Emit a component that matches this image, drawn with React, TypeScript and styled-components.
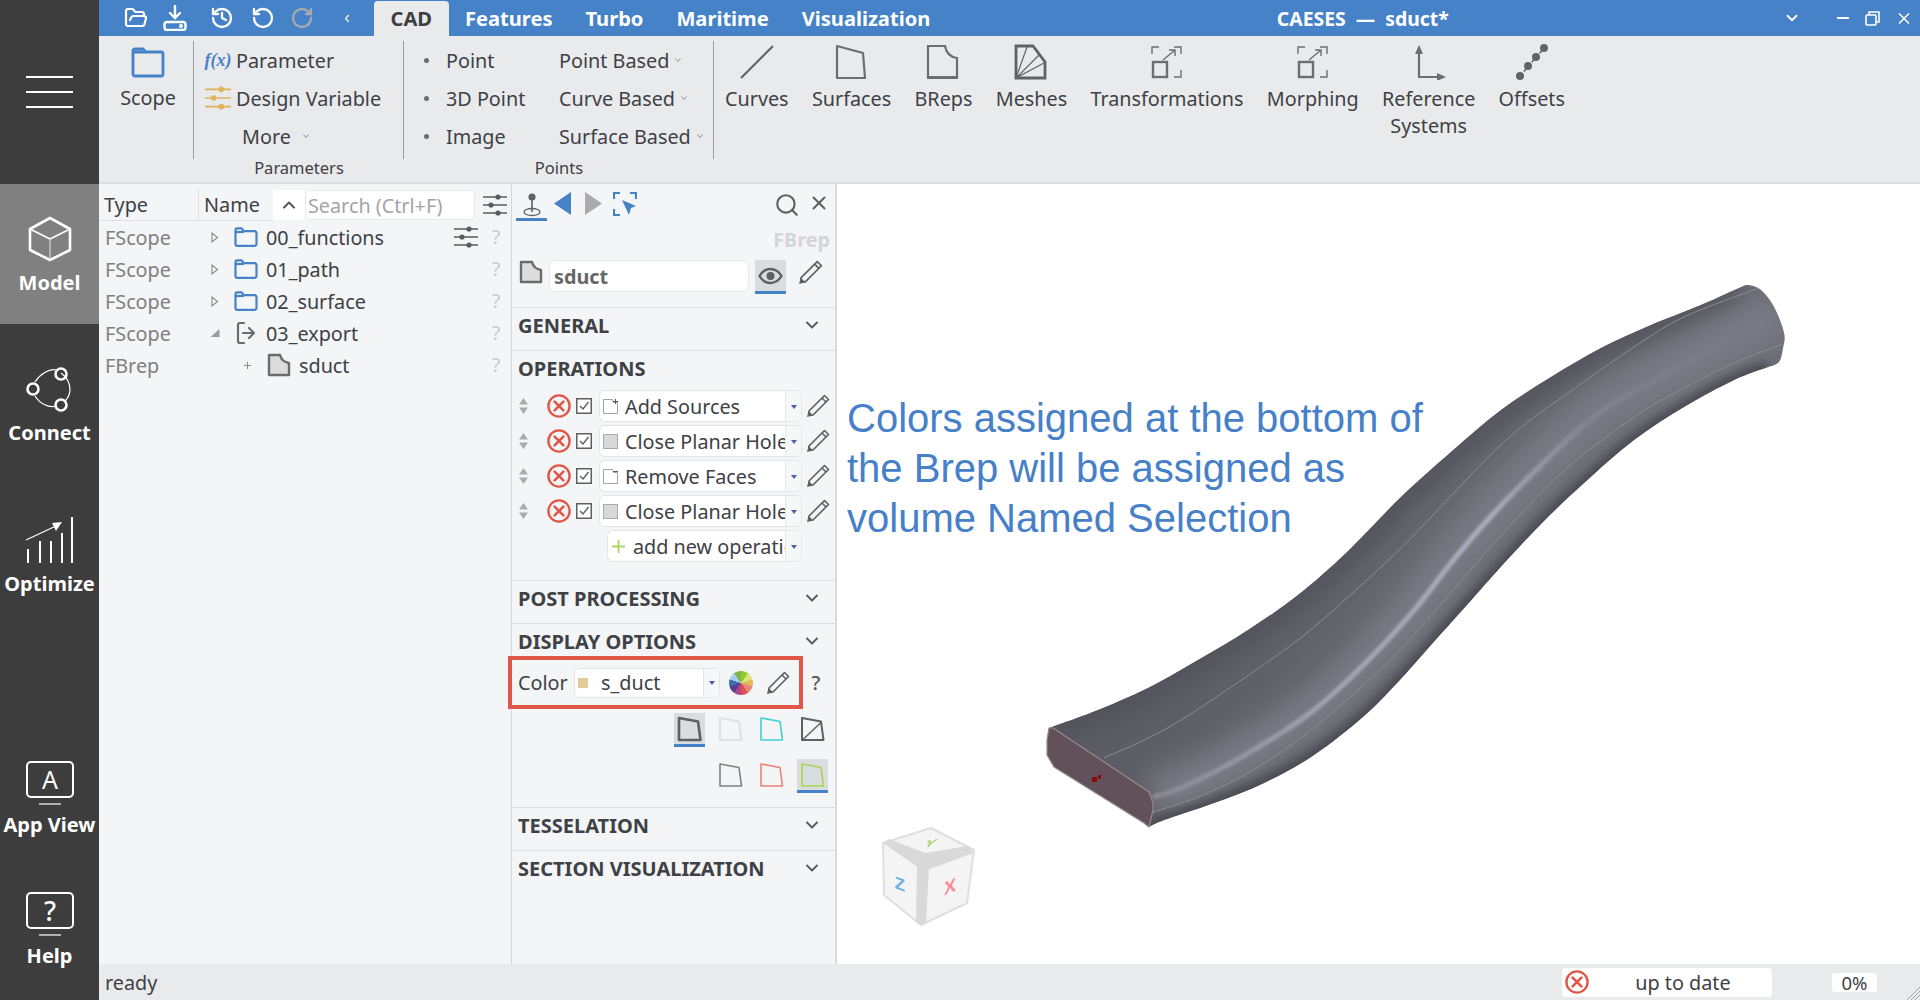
import React from 'react';
import styled, { createGlobalStyle } from 'styled-components';
import { FolderOpen, History, RotateCcw, RotateCw, ChevronLeft, ChevronDown, ChevronUp, Search, X, Minus } from 'lucide-react';

const GlobalStyle = createGlobalStyle`
  html, body { margin: 0; padding: 0; height: 100%; overflow: hidden; }
  #root { height: 100%; }
  * { box-sizing: border-box; }
  body { font-family: "Noto Sans", "Open Sans", sans-serif; font-size: 19.8px; color: #3e4145; }
`;

const Shell = styled.div`display: grid; grid-template-columns: 99px 1fr; width: 1920px; height: 1000px; overflow: hidden;`;

/* ---------- left navigation ---------- */
const Sidebar = styled.nav`background: #3d3d3d; display: flex; flex-direction: column; height: 1000px;`;
const Burger = styled.div`height: 184px; flex: none; display: flex; flex-direction: column; gap: 13px; padding: 76px 26px 0;`;
const BurgerLine = styled.span`display: block; height: 2px; background: #fff;`;
const NavItem = styled.div<{ $active?: boolean; $height: number; $top?: number }>`
  height: ${p => p.$height}px; flex: none; margin-top: ${p => p.$top ?? 0}px;
  background: ${p => (p.$active ? '#808080' : 'transparent')};
  display: flex; flex-direction: column; align-items: center; padding-top: 32px;
`;
const NavIcon = styled.svg`width: 50px; height: 46px; display: block; flex: none; overflow: visible;`;
const NavLabel = styled.span`margin-top: 8px; color: #fff; font-weight: 700; font-size: 20px; line-height: 26px; white-space: nowrap;`;
const NavSpacer = styled.div`flex: 1;`;

/* ---------- title bar ---------- */
const Main = styled.div`display: flex; flex-direction: column; min-width: 0; height: 1000px;`;
const TitleBar = styled.header`height: 36px; flex: none; background: #4682c8; display: flex; align-items: flex-end; color: #fff; padding-left: 25px;`;
const QuickIcon = styled.span<{ $ml: number; $w?: number; $dim?: boolean }>`
  width: ${p => p.$w ?? 24}px; height: 36px; flex: none; margin-left: ${p => p.$ml}px; display: flex; align-items: center; justify-content: center;
  color: ${p => (p.$dim ? '#a6a9ad' : '#fff')};
`;
const Tabs = styled.div`display: flex; margin-left: 21px; height: 36px; align-items: flex-end;`;
const Tab = styled.div<{ $active?: boolean }>`
  height: ${p => (p.$active ? 35 : 36)}px; padding: 0 16.5px; display: flex; align-items: center; font-weight: 700; font-size: 20.1px;
  color: ${p => (p.$active ? '#3e3e3e' : '#fff')}; background: ${p => (p.$active ? '#e9eaec' : 'transparent')};
  border-radius: 4px 4px 0 0;
`;
const WindowTitle = styled.div`margin-left: 330px; height: 36px; display: flex; align-items: center; font-weight: 700; font-size: 19.4px; white-space: pre;`;
const WindowControls = styled.div`margin-left: auto; height: 36px; display: flex; align-items: center; padding-right: 7px;`;
const WindowButton = styled.span<{ $ml: number }>`margin-left: ${p => p.$ml}px; display: flex; align-items: center; justify-content: center; width: 18px; height: 18px;`;

/* ---------- ribbon ---------- */
const Ribbon = styled.section`height: 148px; flex: none; background: #e9eaec; border-bottom: 2px solid #dedfe1; display: flex; align-items: flex-start;`;
const Group = styled.div<{ $w?: number }>`display: flex; flex-direction: column; flex: none; width: ${p => (p.$w ? `${p.$w}px` : 'auto')}; padding-top: 5px;`;
const GroupBody = styled.div<{ $sep?: boolean }>`height: 118px; border-right: ${p => (p.$sep ? '1px solid #9b9da0' : 'none')};`;
const GroupLabel = styled.div`text-align: center; font-size: 16.5px; line-height: 18px; color: #3e4145;`;
const ScopeButton = styled.div`display: flex; flex-direction: column; align-items: center; padding: 2px 0 0 4px;`;
const ListRow = styled.div<{ $pl?: number }>`height: 38px; display: flex; align-items: center; padding-left: ${p => p.$pl ?? 10}px; white-space: nowrap;`;
const RowIcon = styled.span`width: 28px; height: 28px; margin-right: 4px; display: flex; align-items: center; justify-content: center; flex: none;`;
const Fx = styled.i`color: #4682c8; font-family: "Liberation Serif", serif; font-weight: 700; font-size: 18px; white-space: nowrap;`;
const SmallChevron = styled.span<{ $ml: number }>`margin-left: ${p => p.$ml}px; width: 6px; height: 6px; display: inline-flex; align-items: center;`;
const PointGrid = styled.div`display: grid; grid-template-columns: 155px 1fr; grid-auto-rows: 38px;`;
const Bullet = styled.span`width: 5px; height: 5px; border-radius: 50%; background: #6b6d70; margin: 0 17px 0 20px; flex: none;`;
const PointCell = styled.div`display: flex; align-items: center; white-space: nowrap;`;
const LargeRow = styled.div`display: flex; gap: 23.3px; padding: 8px 0 0 11px;`;
const LargeButton = styled.div`display: flex; flex-direction: column; align-items: center; text-align: center; line-height: 27px; white-space: nowrap;`;
const LargeIcon = styled.svg`width: 36px; height: 36px; display: block; flex: none; margin-bottom: 5px;`;

/* ---------- workspace ---------- */
const Workspace = styled.div`flex: 1; display: flex; min-height: 0;`;
const TreePanel = styled.aside`width: 413px; flex: none; background: #f3f5f7; border-right: 1px solid #d5d7da; padding-top: 4px;`;
const TreeHead = styled.div`height: 33px; display: flex; align-items: stretch;`;
const HeadCell = styled.div<{ $w: number; $sep?: boolean }>`
  width: ${p => p.$w}px; flex: none; display: flex; align-items: center; padding-left: 5px;
  border-bottom: 1px solid #dfe1e4; border-right: ${p => (p.$sep ? '1px solid #dfe1e4' : 'none')};
`;
const SortButton = styled.div`width: 32px; height: 30px; margin-top: 2px; background: #fff; flex: none; display: flex; align-items: center; justify-content: center; color: #555;`;
const SearchInput = styled.input`
  width: 170px; height: 30px; margin-top: 2px; flex: none; border: 1px solid #e6e8ea; border-radius: 5px; background: #fff; padding: 0 2px; outline: none;
  font: inherit; color: #444; &::placeholder { color: #a2a4a7; opacity: 1; }
`;
const HeadSliders = styled.span`margin: 5px 0 0 8px; display: flex;`;
const TreeRow = styled.div`height: 32px; display: flex; align-items: center; padding: 0 9px 0 6px;`;
const TypeCell = styled.span`width: 102px; flex: none; color: #808080;`;
const Expander = styled.span<{ $depth?: boolean }>`width: 16px; flex: none; margin-left: ${p => (p.$depth ? 32 : 0)}px; display: flex; justify-content: center; align-items: center;`;
const TreeIcon = styled.span<{ $ml: number }>`width: 24px; height: 24px; margin-left: ${p => p.$ml}px; flex: none; display: flex; align-items: center; justify-content: center;`;
const TreeName = styled.span`margin-left: 8px; white-space: nowrap; color: #3e4145;`;
const RowTail = styled.span`margin-left: auto; display: flex; align-items: center; gap: 12px;`;
const Unknown = styled.span`width: 12px; text-align: center; color: #c8cacc; font-size: 19px;`;

const PropsPanel = styled.section`width: 325px; flex: none; background: #f3f5f7; border-right: 2px solid #d9dbde; padding-top: 8px; position: relative;`;
const PropsToolbar = styled.div`height: 29px; display: flex; align-items: flex-start; padding-left: 4px;`;
const PinTool = styled.div`width: 31px; height: 29px; border-bottom: 3px solid #4682c8; display: flex; justify-content: center; flex: none;`;
const ToolSlot = styled.span<{ $ml: number }>`margin-left: ${p => p.$ml}px; flex: none; display: flex;`;
const TypeTag = styled.div`margin-top: 8px; height: 22px; line-height: 22px; text-align: right; padding-right: 5px; font-weight: 700; color: #d4d5d7;`;
const NameRow = styled.div`margin-top: 9px; height: 34px; display: flex; align-items: flex-start; padding-left: 7px;`;
const NameInput = styled.input`
  width: 200px; height: 32px; margin-left: 6px; flex: none; border: 1px solid #e6e8ea; border-radius: 6px; background: #fff; padding: 0 4px; outline: none;
  font: inherit; font-weight: 700; color: #666;
`;
const EyeToggle = styled.div`width: 31px; height: 34px; margin-left: 6px; flex: none; background: #dadde0; border-bottom: 3px solid #4682c8; display: flex; align-items: center; justify-content: center;`;
const Section = styled.div<{ $pb?: number; $first?: boolean }>`border-top: 1px solid #dcdee1; padding-bottom: ${p => p.$pb ?? 8}px; margin-top: ${p => (p.$first ? 13 : 0)}px;`;
const SectionHead = styled.div`height: 34px; display: flex; align-items: center; justify-content: space-between; padding: 0 13px 0 6px; font-weight: 700; font-size: 20px; color: #3e4145; white-space: nowrap; text-transform: uppercase;`;
const OpList = styled.div`display: flex; flex-direction: column; gap: 3px; margin-top: 5px;`;
const OpRow = styled.div`height: 32px; display: flex; align-items: center; padding-left: 7px;`;
const AddRow = styled.div`height: 32px; display: flex; align-items: center; padding-left: 95px;`;
const Slot = styled.span<{ $ml: number }>`margin-left: ${p => p.$ml}px; display: flex; flex: none;`;
const Combo = styled.div<{ $w: number; $h?: number; $ml?: number }>`
  width: ${p => p.$w}px; height: ${p => p.$h ?? 32}px; margin-left: ${p => p.$ml ?? 0}px; flex: none;
  background: #fff; border: 1px solid #e3e5e8; border-radius: 6px; display: flex; align-items: center; overflow: hidden;
`;
const ComboValue = styled.span`flex: 1; min-width: 0; display: flex; align-items: center; overflow: hidden; white-space: nowrap; padding-left: 3px; svg { flex: none; }`;
const ComboText = styled.span<{ $ml?: number }>`margin-left: ${p => p.$ml ?? 7}px; color: #3e4145; flex: none;`;
const ComboArrow = styled.span`width: 16px; align-self: stretch; flex: none; border-left: 1px solid #e3e5e8; background: #f6f7f8; display: flex; align-items: center; justify-content: center;`;
const ArrowDown = styled.span`width: 0; height: 0; border: 3px solid transparent; border-top: 4px solid #4a5fb0; margin-top: 4px;`;
const ColorWrap = styled.div`display: flex; align-items: center; margin-top: -2px;`;
const ColorBox = styled.div`width: 295px; height: 53px; margin-left: -4px; flex: none; border: 4px solid #e0574a; display: flex; align-items: center; padding-left: 6px;`;
const ColorLabel = styled.span`width: 56px; flex: none;`;
const Wheel = styled.span`
  width: 24px; height: 24px; border-radius: 50%; margin-left: 9px; flex: none;
  background: conic-gradient(#8ecb2f 0 36deg, #dfe37c 36deg 72deg, #dfb95c 72deg 108deg, #ea8478 108deg 144deg, #e24f4f 144deg 180deg, #a8478f 180deg 216deg, #5a3f8a 216deg 252deg, #3d6ea8 252deg 288deg, #a8cbef 288deg 324deg, #7fb44a 324deg 360deg);
`;
const HelpMark = styled.span`margin-left: 7px; width: 12px; text-align: center; font-weight: 500; color: #55585c;`;
const ShapeRow = styled.div<{ $mt: number }>`height: 34px; margin-top: ${p => p.$mt}px; display: flex; justify-content: flex-end; align-items: center; padding-right: 7px; gap: 10px;`;
const ShapeButton = styled.span<{ $on?: boolean }>`
  width: 31px; height: 34px; display: flex; align-items: center; justify-content: center; flex: none;
  background: ${p => (p.$on ? '#dadde0' : 'transparent')}; border-bottom: 3px solid ${p => (p.$on ? '#4682c8' : 'transparent')};
`;

const Viewport = styled.main`flex: 1; background: #fff; position: relative; overflow: hidden;`;
const Annotation = styled.div`position: absolute; left: 10px; top: 209px; font-family: "Liberation Sans", Arial, sans-serif; font-size: 40px; line-height: 50px; color: #4680c8; white-space: nowrap;`;
const Scene = styled.svg`position: absolute; left: 0; top: 0; width: 1085px; height: 780px;`;

/* ---------- status bar ---------- */
const StatusBar = styled.footer`height: 36px; flex: none; background: #e9eaec; display: flex; align-items: center; padding-left: 6px; position: relative;`;
const StatusField = styled.div`margin-left: auto; width: 210px; height: 29px; background: #fff; border-radius: 4px; display: flex; align-items: center; padding-left: 3px;`;
const StatusText = styled.span`flex: 1; text-align: center; padding-left: 5px;`;
const Percent = styled.div`width: 45px; height: 19px; margin: 0 43px 0 60px; background: #fff; border-radius: 3px; display: flex; align-items: center; justify-content: center; font-size: 18.5px;`;
const Grip = styled.svg`position: absolute; right: 0; bottom: 0; width: 14px; height: 14px;`;

/* ---------- shared drawings ---------- */
const Sliders = ({ color = '#5a5c60', size = 24 }: { color?: string; size?: number }) => (
  <svg width={size} height={size} viewBox="0 0 24 24" fill="none" stroke={color} strokeWidth="1.6">
    <path d="M0 4h24M0 12h24M0 20h24" />
    <circle cx="15" cy="4" r="2.6" fill={color} stroke="none" />
    <circle cx="8" cy="12" r="2.6" fill={color} stroke="none" />
    <circle cx="15" cy="20" r="2.6" fill={color} stroke="none" />
  </svg>
);
const Folder = ({ w = 24, h = 20 }: { w?: number; h?: number }) => (
  <svg width={w} height={h} viewBox="0 0 24 20" fill="none" stroke="#4682c8" strokeWidth="2.2" strokeLinejoin="round">
    <path d="M1.5 17V3a1.6 1.6 0 0 1 1.6-1.6h4.6l2 2.8h11a1.8 1.8 0 0 1 1.8 1.8V17a1.8 1.8 0 0 1-1.8 1.8H3.2A1.8 1.8 0 0 1 1.5 17z" />
    <path d="M2 5h8" />
  </svg>
);
const BrepDoc = ({ size = 24 }: { size?: number }) => (
  <svg width={size} height={size} viewBox="0 0 24 24">
    <path d="M2 2h11c1 4 3 7 9 8v12H2z" fill="#dcdcdc" stroke="#6b6b6b" strokeWidth="2.4" strokeLinejoin="round" />
  </svg>
);
const Pencil = ({ size = 24 }: { size?: number }) => (
  <svg width={size} height={size} viewBox="0 0 24 24" fill="none" stroke="#5e6063" strokeWidth="1.6" strokeLinejoin="round">
    <path d="M18.5 1.5l4 4L7 21 2.8 21.3 3 17z" />
    <path d="M16 4l4 4" />
    <path d="M1 23l1.6-6.2 4.6 4.6z" fill="#5e6063" stroke="none" />
  </svg>
);
const ErrorCircle = ({ size = 24 }: { size?: number }) => (
  <svg width={size} height={size} viewBox="0 0 24 24" fill="none" stroke="#e0574a" strokeWidth="2.4" strokeLinecap="round">
    <circle cx="12" cy="12" r="10.6" />
    <path d="M7.6 7.6l8.8 8.8M16.4 7.6l-8.8 8.8" strokeWidth="2.6" />
  </svg>
);
const Checked = () => (
  <svg width="16" height="16" viewBox="0 0 16 16" fill="none">
    <rect x="0.75" y="0.75" width="14.5" height="14.5" fill="#fff" stroke="#5d5f62" strokeWidth="1.5" />
    <path d="M4 8l3 3 5.5-7" stroke="#5d5f62" strokeWidth="1.4" />
  </svg>
);
const UpDown = () => (
  <svg width="9" height="16" viewBox="0 0 9 16" fill="#a9abae">
    <path d="M4.5 0L9 6.5H0zM0 9.5h9L4.5 16z" />
  </svg>
);
const TriangleOpen = () => (
  <svg width="8" height="11" viewBox="0 0 8 11" fill="none" stroke="#8a8c8f" strokeWidth="1.1"><path d="M1 1l5.5 4.5L1 10z" /></svg>
);
const TriangleDown = () => (
  <svg width="10" height="10" viewBox="0 0 10 10" fill="#9a9c9f"><path d="M9.5 1v8H0.5z" /></svg>
);
const Quad = ({ stroke, width = 1.6, diag }: { stroke: string; width?: number; diag?: boolean }) => (
  <svg width="26" height="26" viewBox="0 0 26 26" fill="none" stroke={stroke} strokeWidth={width} strokeLinejoin="round">
    <path d="M2 2l19 3.5 2.5 18.5H2z" />
    {diag && <path d="M2.5 24L21.5 6" strokeWidth="1.4" />}
  </svg>
);
const OpDoc = ({ mark }: { mark?: 'plus' | 'minus' }) => (
  <svg width="15" height="15" viewBox="0 0 15 15" fill="none" stroke="#8d8f92" strokeWidth="1">
    <path d="M0.5 0.5h9l1 3h4v11H0.5z" stroke="#a2a4a7" />
    {mark === 'plus' && <path d="M12.5 0v5M10 2.5h5" stroke="#55585c" />}
    {mark === 'minus' && <path d="M10 2.5h5" stroke="#55585c" />}
  </svg>
);
const OpFill = () => (
  <svg width="15" height="15" viewBox="0 0 15 15"><rect x="0.5" y="0.5" width="14" height="14" fill="#d8d8d8" stroke="#a8aaad" /></svg>
);
const Tiny = () => (
  <svg width="6" height="6" viewBox="0 0 6 6" fill="none" stroke="#8d8f92" strokeWidth="1"><path d="M0.5 1.5L3 4.5l2.5-3" /></svg>
);

const largeItems: { label: React.ReactNode; icon: React.ReactNode }[] = [
  { label: 'Curves', icon: <path d="M2 34L34 2" stroke="#626366" strokeWidth="2.2" fill="none" /> },
  { label: 'Surfaces', icon: <path d="M3 2l26 7 2 25H3z" stroke="#6c6d70" strokeWidth="2.2" fill="none" strokeLinejoin="round" /> },
  { label: 'BReps', icon: <g fill="none" stroke="#6c6d70" strokeWidth="2.2"><path d="M3 2h17c1 6 5 11 12 12v20H3z" /><path d="M3 33.5h29" strokeWidth="3" /></g> },
  { label: 'Meshes', icon: <g fill="none" stroke="#616264"><path d="M3 2h17l12 16v16H3z" strokeWidth="2.8" /><path d="M3 34L14 3M3 34L26 11M3 34L31 19" strokeWidth="1.2" /></g> },
  { label: 'Transformations', icon: <g fill="none" stroke="#6c6d70"><path d="M3 10V3h7M25 3h7v7M32 26v7h-7" strokeWidth="1.4" /><rect x="4" y="18" width="14" height="15" strokeWidth="2.4" /><path d="M14 16l12-10M20 6h6v6" strokeWidth="1.4" /></g> },
  { label: 'Morphing', icon: <g fill="none" stroke="#6c6d70"><path d="M3 10V3h7M25 3h7v7M32 26v7h-7" strokeWidth="1.4" /><rect x="4" y="18" width="14" height="15" strokeWidth="2.4" /><path d="M14 16l12-10M20 6h6v6" strokeWidth="1.4" /></g> },
  { label: <>Reference<br />Systems</>, icon: <g stroke="#6c6d70" fill="#6c6d70"><path d="M8 8v25h20" strokeWidth="2.2" fill="none" /><path d="M8 1l4 9H4zM35 33l-9 4v-8z" stroke="none" /></g> },
  { label: 'Offsets', icon: <g fill="#626366"><circle cx="6" cy="32" r="4" /><circle cx="14" cy="22" r="4" /><circle cx="22" cy="13" r="4" /><circle cx="30" cy="4" r="4" /><path d="M6 32L30 4" stroke="#626366" strokeWidth="1.6" strokeDasharray="3 3" /></g> },
];

type P = [number, number];
function smooth(pts: P[], move = true) {
  let d = move ? `M${pts[0][0]} ${pts[0][1]}` : `L${pts[0][0]} ${pts[0][1]}`;
  for (let i = 0; i < pts.length - 1; i++) {
    const a = pts[i - 1] ?? pts[i], b = pts[i], c = pts[i + 1], e = pts[i + 2] ?? c;
    d += `C${(b[0] + (c[0] - a[0]) / 6).toFixed(1)} ${(b[1] + (c[1] - a[1]) / 6).toFixed(1)} ${(c[0] - (e[0] - b[0]) / 6).toFixed(1)} ${(c[1] - (e[1] - b[1]) / 6).toFixed(1)} ${c[0]} ${c[1]}`;
  }
  return d;
}
const topEdge: P[] = [[1048, 728], [1097, 710], [1147, 688], [1197, 660], [1247, 630], [1297, 595], [1345, 553], [1400, 497], [1450, 452], [1500, 410], [1550, 377], [1600, 348], [1650, 325], [1700, 305], [1740, 287]];
const cap: P[] = [[1740, 287], [1747, 285], [1760, 290], [1773, 307], [1783, 333], [1782, 348], [1778, 362], [1767, 367]];
const bottomEdge: P[] = [[1767, 367], [1733, 380], [1683, 407], [1633, 440], [1583, 483], [1540, 524], [1497, 570], [1465, 606], [1430, 645], [1397, 682], [1363, 716], [1313, 755], [1263, 783], [1213, 803], [1163, 820], [1148, 827]];
const ductOutline = smooth(topEdge) + smooth(cap, false) + smooth(bottomEdge, false) + 'L1143 823L1053 767L1046 755L1046 740Z';
const ridge: P[] = [[1152, 797], [1180, 788], [1230, 763], [1280, 733], [1313, 710], [1347, 680], [1380, 647], [1415, 608], [1450, 563], [1483, 524], [1517, 488], [1577, 430], [1617, 400], [1667, 373], [1733, 337], [1782, 313]];
const lineA: P[] = [[1103, 758], [1163, 730], [1230, 687], [1297, 640], [1347, 597], [1403, 545], [1467, 478], [1513, 433], [1567, 393], [1633, 347], [1683, 317], [1758, 288]];
const lineB: P[] = [[1152, 812], [1197, 797], [1247, 773], [1297, 740], [1347, 699], [1397, 652], [1433, 612], [1473, 566], [1517, 517], [1567, 467], [1633, 417], [1683, 388], [1733, 363], [1782, 344]];

const Duct = () => (
  <Scene viewBox="836 184 1085 780">
    <defs>
      <clipPath id="ductClip"><path d={ductOutline} /></clipPath>
      <linearGradient id="ductBase" x1="1050" y1="780" x2="1770" y2="300" gradientUnits="userSpaceOnUse">
        <stop offset="0" stopColor="#5a5b63" />
        <stop offset="0.5" stopColor="#65666e" />
        <stop offset="1" stopColor="#6c6d76" />
      </linearGradient>
      <filter id="b14" x="-20%" y="-20%" width="140%" height="140%"><feGaussianBlur stdDeviation="13" /></filter>
      <filter id="b2" x="-20%" y="-20%" width="140%" height="140%"><feGaussianBlur stdDeviation="1.8" /></filter>
      <filter id="b6" x="-20%" y="-20%" width="140%" height="140%"><feGaussianBlur stdDeviation="4" /></filter>
      <linearGradient id="ridgeFade" x1="1152" y1="797" x2="1782" y2="313" gradientUnits="userSpaceOnUse">
        <stop offset="0" stopColor="#8a8b97" />
        <stop offset="0.25" stopColor="#a4a6b4" />
        <stop offset="0.55" stopColor="#aeb0be" />
        <stop offset="0.72" stopColor="#8a8b96" stopOpacity="0.7" />
        <stop offset="1" stopColor="#7d7e88" stopOpacity="0" />
      </linearGradient>
    </defs>
    <g clipPath="url(#ductClip)">
      <rect x="1000" y="260" width="820" height="600" fill="url(#ductBase)" />
      <path d={smooth(topEdge)} fill="none" stroke="#4f5058" strokeWidth="26" filter="url(#b14)" />
      <path d={smooth(ridge)} fill="none" stroke="#797a84" strokeWidth="46" filter="url(#b14)" />
      <path d={smooth(bottomEdge)} fill="none" stroke="#4a4b53" strokeWidth="12" filter="url(#b6)" />
      <path d={smooth(ridge)} fill="none" stroke="url(#ridgeFade)" strokeWidth="5" filter="url(#b2)" />
      <path d={smooth(lineA)} fill="none" stroke="#8b8c8a" strokeWidth="1" />
      <path d={smooth(lineB)} fill="none" stroke="#8b8c8a" strokeWidth="1" />
    </g>
    <path d="M1048 728L1046 740L1046 755L1053 767L1143 823L1148 827L1152 810L1152 803L1148 792L1052 728Z" fill="#62505a" stroke="#8f8d8d" strokeWidth="1.2" strokeLinejoin="round" />
    <path d="M1091 777h5v5h-5zM1097 775h3v4h-3z" fill="#8b0a10" />
  </Scene>
);

const Cube = () => (
  <Scene viewBox="836 184 1085 780">
    <g strokeLinejoin="round">
      <path d="M930 828L882 843L883 895L920 925L966 903L973 850Z" fill="#f4f4f4" stroke="#dfdfdf" strokeWidth="2" />
      <path d="M882 843L888 839L924 853L967 846L972 853L924 871L918 868Z" fill="#d9d9d9" />
      <path d="M916 866C920 861 926 861 928 868L925 923C922 926 917 925 915 921Z" fill="#d9d9d9" />
    </g>
    <text transform="translate(927 847) rotate(-10) skewX(-45) scale(1 .55)" textAnchor="middle" fontFamily="Liberation Sans, sans-serif" fontSize="17" fontWeight="700" fill="#a3d368" style={{ filter: 'blur(0.4px)' }}>Y</text>
    <text transform="translate(899 890) skewY(20)" textAnchor="middle" fontFamily="Liberation Sans, sans-serif" fontSize="17" fontWeight="700" fill="#68aee0" style={{ filter: 'blur(0.4px)' }}>Z</text>
    <text transform="translate(949 893) skewY(-22)" textAnchor="middle" fontFamily="Liberation Sans, sans-serif" fontSize="18" fontWeight="700" fill="#f58a92" style={{ filter: 'blur(0.4px)' }}>X</text>
  </Scene>
);

const ops = [
  { name: 'Add Sources', icon: <OpDoc mark="plus" /> },
  { name: 'Close Planar Holes', icon: <OpFill /> },
  { name: 'Remove Faces', icon: <OpDoc mark="minus" /> },
  { name: 'Close Planar Holes', icon: <OpFill /> },
];

const treeRows = [
  { type: 'FScope', name: '00_functions', kind: 'folder', sliders: true },
  { type: 'FScope', name: '01_path', kind: 'folder' },
  { type: 'FScope', name: '02_surface', kind: 'folder' },
  { type: 'FScope', name: '03_export', kind: 'export' },
  { type: 'FBrep', name: 'sduct', kind: 'brep' },
];

export default function App() {
  return (
    <Shell>
      <GlobalStyle />
      <Sidebar>
        <Burger><BurgerLine /><BurgerLine /><BurgerLine /></Burger>
        <NavItem $active $height={140}>
          <NavIcon viewBox="0 0 50 46" fill="none" stroke="#fff" strokeLinejoin="round">
            <path d="M25 2l20 11v21L25 44 5 34V13z" strokeWidth="2.6" />
            <path d="M5 13l20 10 20-10" strokeWidth="1.6" />
            <path d="M25 23v21" strokeWidth="1.2" stroke="#d5d5d5" />
          </NavIcon>
          <NavLabel>Model</NavLabel>
        </NavItem>
        <NavItem $height={151} $top={10}>
          <NavIcon viewBox="0 0 50 46" fill="none" stroke="#fff">
            <path d="M36 7a21 21 0 0 1 9 17 17 17 0 0 1-6 12M10 16c5-8 15-14 21-12M10 30c5 8 14 12 21 10" strokeWidth="1.2" />
            <circle cx="36" cy="8" r="5.5" strokeWidth="2.6" />
            <circle cx="8" cy="23" r="5.5" strokeWidth="2.6" />
            <circle cx="36" cy="39" r="5.5" strokeWidth="2.6" />
          </NavIcon>
          <NavLabel>Connect</NavLabel>
        </NavItem>
        <NavItem $height={140}>
          <NavIcon viewBox="1 0 50 46" fill="none" stroke="#fff">
            <path d="M4 46V32M16 46V24M27 46V24M38 46V16M48 46V0" strokeWidth="2" />
            <path d="M2 23l32-15" strokeWidth="1.2" />
            <path d="M38 5l-10 1 4 8z" fill="#fff" stroke="none" />
          </NavIcon>
          <NavLabel>Optimize</NavLabel>
        </NavItem>
        <NavSpacer />
        <NavItem $height={131}>
          <NavIcon viewBox="0 -3 50 46" fill="none" stroke="#fff">
            <rect x="2" y="1" width="46" height="35" rx="4" strokeWidth="2" />
            <path d="M14 43h22" strokeWidth="1.6" stroke="#cfcfcf" />
            <text x="25" y="28" textAnchor="middle" fontFamily="Noto Sans, sans-serif" fontSize="25" fill="#fff" stroke="none">A</text>
          </NavIcon>
          <NavLabel>App View</NavLabel>
        </NavItem>
        <NavItem $height={143}>
          <NavIcon viewBox="0 -3 50 46" fill="none" stroke="#fff">
            <rect x="2" y="1" width="46" height="35" rx="4" strokeWidth="2" />
            <path d="M14 43h22" strokeWidth="1.6" stroke="#cfcfcf" />
            <text x="25" y="29" textAnchor="middle" fontFamily="Noto Sans, sans-serif" fontSize="27" fontWeight="500" fill="#fff" stroke="none">?</text>
          </NavIcon>
          <NavLabel>Help</NavLabel>
        </NavItem>
      </Sidebar>

      <Main>
        <TitleBar>
          <QuickIcon $ml={0}><FolderOpen size={26} strokeWidth={2.2} /></QuickIcon>
          <QuickIcon $ml={15}>
            <svg width="24" height="26" viewBox="0 0 24 26" fill="none" stroke="#fff" strokeWidth="2.4" strokeLinecap="round">
              <path d="M12 1v11M7 8l5 5 5-5" />
              <rect x="1.5" y="17" width="21" height="8" rx="2.5" />
              <circle cx="18" cy="21" r="0.8" fill="#fff" />
            </svg>
          </QuickIcon>
          <QuickIcon $ml={23}><History size={26} strokeWidth={2.3} /></QuickIcon>
          <QuickIcon $ml={17}><RotateCcw size={26} strokeWidth={2.3} /></QuickIcon>
          <QuickIcon $ml={15} $dim><RotateCw size={26} strokeWidth={2.3} /></QuickIcon>
          <QuickIcon $ml={27} $w={12}><ChevronLeft size={15} strokeWidth={2.4} /></QuickIcon>
          <Tabs>
            <Tab $active>CAD</Tab>
            <Tab>Features</Tab>
            <Tab>Turbo</Tab>
            <Tab>Maritime</Tab>
            <Tab>Visualization</Tab>
          </Tabs>
          <WindowTitle>CAESES  —  sduct*</WindowTitle>
          <WindowControls>
            <WindowButton $ml={0}><ChevronDown size={20} strokeWidth={2.4} /></WindowButton>
            <WindowButton $ml={33}><Minus size={18} strokeWidth={2.4} /></WindowButton>
            <WindowButton $ml={11}>
              <svg width="15" height="15" viewBox="0 0 15 15" fill="none" stroke="#fff" strokeWidth="1.6">
                <rect x="1" y="4" width="10" height="10" rx="1" />
                <path d="M4 4V1h10v10h-3" />
              </svg>
            </WindowButton>
            <WindowButton $ml={14}><X size={19} strokeWidth={2.2} /></WindowButton>
          </WindowControls>
        </TitleBar>

        <Ribbon>
          <Group $w={95}>
            <GroupBody $sep>
              <ScopeButton>
                <LargeIcon viewBox="0 0 36 36">
                  <path d="M3 8a2 2 0 0 1 2-2h8l3 3h15a2 2 0 0 1 2 2v20a2 2 0 0 1-2 2H5a2 2 0 0 1-2-2z" fill="none" stroke="#4682c8" strokeWidth="2.8" strokeLinejoin="round" />
                  <path d="M3 9h13" stroke="#4682c8" strokeWidth="3" />
                </LargeIcon>
                <span>Scope</span>
              </ScopeButton>
            </GroupBody>
          </Group>
          <Group $w={210}>
            <GroupBody $sep>
              <ListRow><RowIcon><Fx>f(x)</Fx></RowIcon>Parameter</ListRow>
              <ListRow><RowIcon><Sliders color="#e0b45c" size={26} /></RowIcon>Design Variable</ListRow>
              <ListRow $pl={48}>More<SmallChevron $ml={12}><Tiny /></SmallChevron></ListRow>
            </GroupBody>
            <GroupLabel>Parameters</GroupLabel>
          </Group>
          <Group $w={310}>
            <GroupBody $sep>
              <PointGrid>
                <PointCell><Bullet />Point</PointCell>
                <PointCell>Point Based<SmallChevron $ml={6}><Tiny /></SmallChevron></PointCell>
                <PointCell><Bullet />3D Point</PointCell>
                <PointCell>Curve Based<SmallChevron $ml={6}><Tiny /></SmallChevron></PointCell>
                <PointCell><Bullet />Image</PointCell>
                <PointCell>Surface Based<SmallChevron $ml={6}><Tiny /></SmallChevron></PointCell>
              </PointGrid>
            </GroupBody>
            <GroupLabel>Points</GroupLabel>
          </Group>
          <LargeRow>
            {largeItems.map((item, i) => (
              <LargeButton key={i}>
                <LargeIcon viewBox="0 0 36 36">{item.icon}</LargeIcon>
                <span>{item.label}</span>
              </LargeButton>
            ))}
          </LargeRow>
        </Ribbon>

        <Workspace>
          <TreePanel>
            <TreeHead>
              <HeadCell $w={100} $sep>Type</HeadCell>
              <HeadCell $w={74}>Name</HeadCell>
              <SortButton><ChevronUp size={20} strokeWidth={2.4} /></SortButton>
              <SearchInput placeholder="Search (Ctrl+F)" />
              <HeadSliders><Sliders /></HeadSliders>
            </TreeHead>
            {treeRows.map(r => (
              <TreeRow key={r.name}>
                <TypeCell>{r.type}</TypeCell>
                <Expander $depth={r.kind === 'brep'}>
                  {r.kind === 'folder' && <TriangleOpen />}
                  {r.kind === 'export' && <TriangleDown />}
                  {r.kind === 'brep' && <svg width="7" height="7" viewBox="0 0 7 7" stroke="#8a8c8f"><path d="M3.5 0v7M0 3.5h7" /></svg>}
                </Expander>
                <TreeIcon $ml={r.kind === 'brep' ? 12 : 11}>
                  {r.kind === 'folder' && <Folder />}
                  {r.kind === 'export' && (
                    <svg width="20" height="24" viewBox="0 0 20 24" fill="none" stroke="#6a6c70" strokeWidth="2.2" strokeLinecap="round" strokeLinejoin="round">
                      <path d="M8 2H4a2 2 0 0 0-2 2v16a2 2 0 0 0 2 2h4" />
                      <path d="M7 12h11M13 7l5 5-5 5" />
                    </svg>
                  )}
                  {r.kind === 'brep' && <BrepDoc />}
                </TreeIcon>
                <TreeName>{r.name}</TreeName>
                <RowTail>
                  {r.sliders && <Sliders />}
                  <Unknown>?</Unknown>
                </RowTail>
              </TreeRow>
            ))}
          </TreePanel>

          <PropsPanel>
            <PropsToolbar>
              <PinTool>
                <svg width="26" height="26" viewBox="0 0 26 26" fill="none" stroke="#5e6063">
                  <circle cx="13" cy="5" r="3.6" fill="#5e6063" stroke="none" />
                  <path d="M13 6v14" strokeWidth="1.6" />
                  <ellipse cx="13" cy="20" rx="8" ry="3.5" strokeWidth="1.3" />
                </svg>
              </PinTool>
              <ToolSlot $ml={7}><svg width="17" height="23" viewBox="0 0 17 23" fill="#4682c8"><path d="M17 0v23L0 11.5z" /></svg></ToolSlot>
              <ToolSlot $ml={14}><svg width="17" height="23" viewBox="0 0 17 23" fill="#a9abae"><path d="M0 0v23l17-11.5z" /></svg></ToolSlot>
              <ToolSlot $ml={11}>
                <svg width="24" height="24" viewBox="0 0 24 24" fill="none" stroke="#4682c8" strokeWidth="2.2">
                  <path d="M1 7V1h6M17 1h6v6M1 17v6h6" />
                  <path d="M9 8l14 6-5 2-2 7z" fill="#4682c8" stroke="none" />
                </svg>
              </ToolSlot>
              <ToolSlot $ml={137}><Search size={26} color="#5e6063" strokeWidth={2} /></ToolSlot>
              <ToolSlot $ml={8}><X size={22} color="#5e6063" strokeWidth={2.2} /></ToolSlot>
            </PropsToolbar>
            <TypeTag>FBrep</TypeTag>
            <NameRow>
              <span><BrepDoc /></span>
              <NameInput defaultValue="sduct" />
              <EyeToggle>
                <svg width="25" height="18" viewBox="0 0 25 18" fill="none" stroke="#5e5f62" strokeWidth="2.4">
                  <path d="M1.5 9C4.5 4 8 2 12.5 2S20.5 4 23.5 9c-3 5-6.5 7-11 7S4.500 14 1.500 9z" />
                  <circle cx="12.5" cy="9" r="4" fill="#5e5f62" stroke="none" />
                </svg>
              </EyeToggle>
              <Slot $ml={12}><Pencil size={25} /></Slot>
            </NameRow>

            <Section $first>
              <SectionHead>General<ChevronDown size={20} color="#55585c" strokeWidth={2.2} /></SectionHead>
            </Section>
            <Section $pb={18}>
              <SectionHead>Operations</SectionHead>
              <OpList>
                {ops.map((op, i) => (
                  <OpRow key={i}>
                    <UpDown />
                    <Slot $ml={19}><ErrorCircle /></Slot>
                    <Slot $ml={5}><Checked /></Slot>
                    <Combo $w={203} $ml={7}>
                      <ComboValue>{op.icon}<ComboText>{op.name}</ComboText></ComboValue>
                      <ComboArrow><ArrowDown /></ComboArrow>
                    </Combo>
                    <Slot $ml={4}><Pencil /></Slot>
                  </OpRow>
                ))}
                <AddRow>
                  <Combo $w={195}>
                    <ComboValue>
                      <svg width="15" height="15" viewBox="0 0 15 15" stroke="#a9d65c" strokeWidth="1.8"><path d="M7.5 1v13M1 7.5h13" /></svg>
                      <ComboText>add new operation</ComboText>
                    </ComboValue>
                    <ComboArrow><ArrowDown /></ComboArrow>
                  </Combo>
                </AddRow>
              </OpList>
            </Section>
            <Section>
              <SectionHead>Post Processing<ChevronDown size={20} color="#55585c" strokeWidth={2.2} /></SectionHead>
            </Section>
            <Section $pb={14}>
              <SectionHead>Display Options<ChevronDown size={20} color="#55585c" strokeWidth={2.2} /></SectionHead>
              <ColorWrap>
                <ColorBox>
                  <ColorLabel>Color</ColorLabel>
                  <Combo $w={146} $h={30}>
                    <ComboValue>
                      <svg width="10" height="10" viewBox="0 0 10 10"><rect width="10" height="10" fill="#e1cb9b" /></svg>
                      <ComboText $ml={13}>s_duct</ComboText>
                    </ComboValue>
                    <ComboArrow><ArrowDown /></ComboArrow>
                  </Combo>
                  <Wheel />
                  <Slot $ml={13}><Pencil /></Slot>
                </ColorBox>
                <HelpMark>?</HelpMark>
              </ColorWrap>
              <ShapeRow $mt={4}>
                <ShapeButton $on><Quad stroke="#5e6063" width={2.6} /></ShapeButton>
                <ShapeButton><Quad stroke="#e0e1e3" width={2.2} /></ShapeButton>
                <ShapeButton><Quad stroke="#3fd0d0" /></ShapeButton>
                <ShapeButton><Quad stroke="#5e6063" width={2} diag /></ShapeButton>
              </ShapeRow>
              <ShapeRow $mt={12}>
                <ShapeButton><Quad stroke="#7f8184" /></ShapeButton>
                <ShapeButton><Quad stroke="#ec8378" /></ShapeButton>
                <ShapeButton $on><Quad stroke="#a6d84e" /></ShapeButton>
              </ShapeRow>
            </Section>
            <Section>
              <SectionHead>Tesselation<ChevronDown size={20} color="#55585c" strokeWidth={2.2} /></SectionHead>
            </Section>
            <Section>
              <SectionHead>Section Visualization<ChevronDown size={20} color="#55585c" strokeWidth={2.2} /></SectionHead>
            </Section>
          </PropsPanel>

          <Viewport>
            <Duct />
            <Cube />
            <Annotation>
              Colors assigned at the bottom of<br />
              the Brep will be assigned as<br />
              volume Named Selection
            </Annotation>
          </Viewport>
        </Workspace>

        <StatusBar>
          ready
          <StatusField>
            <ErrorCircle />
            <StatusText>up to date</StatusText>
          </StatusField>
          <Percent>0%</Percent>
          <Grip viewBox="0 0 14 14" stroke="#a6a8ab" strokeWidth="1">
            <path d="M14 1L1 14M14 5L5 14M14 9L9 14" />
          </Grip>
        </StatusBar>
      </Main>
    </Shell>
  );
}
